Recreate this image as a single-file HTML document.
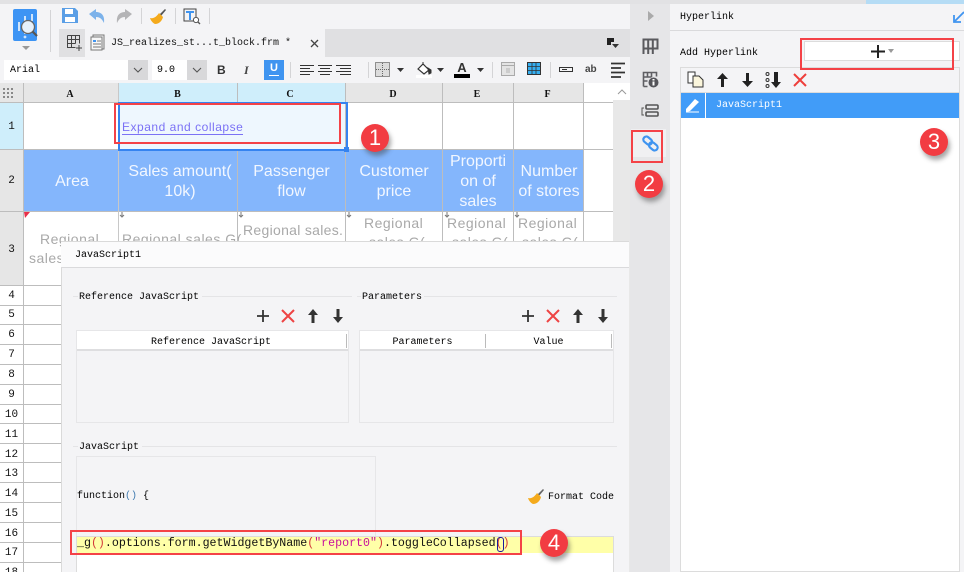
<!DOCTYPE html>
<html><head><meta charset="utf-8">
<style>
html,body{margin:0;padding:0;background:#f4f4f6}
#p{position:relative;width:964px;height:572px;overflow:hidden;background:#f4f4f6;font-family:"Liberation Mono",monospace;font-size:10px;color:#000}
#p div,#p svg{position:absolute}
.hl{height:1px;background:#bdbdbd}
.vl{width:1px;background:#bdbdbd}
.ch{top:83px;height:19px;line-height:23px;text-align:center;font:bold 10px/23px "Liberation Serif",serif;color:#111}
.rn{left:0;width:23px;text-align:center;font:11px/12px "Liberation Mono",monospace;color:#111}
.hd{top:150px;height:61px;padding-top:2px;box-sizing:border-box;background:#84b6fc;color:#f2f7ff;font:16px/20px "Liberation Sans",sans-serif;text-align:center;display:flex;align-items:center;justify-content:center;overflow:hidden}
.g{color:#a9a9a9;font:14px/18px "Liberation Sans",sans-serif;letter-spacing:.5px;white-space:nowrap}
.red{border:2px solid #f44247;box-sizing:border-box}
.b{width:28px;height:28px;border-radius:50%;background:#f23c42;color:#fff;font:22px/28px "Liberation Sans",sans-serif;text-align:center;box-shadow:2px 4px 5px rgba(60,60,60,.45)}
.t{white-space:nowrap;line-height:12px}
.sep{width:1px;background:#d4d4d6}
</style></head><body><div id="p">

<!-- top strip -->
<div style="left:0;top:0;width:964px;height:4px;background:#e2e2e4"></div>
<div style="left:866px;top:0;width:98px;height:4px;background:#b5dcf5"></div>

<!-- tab bar -->
<div style="left:59px;top:29px;width:571px;height:28px;background:#e0e0e2"></div>
<div style="left:85px;top:29px;width:240px;height:28px;background:#f4f4f6"></div>

<!-- left app icon -->
<div style="left:13px;top:9px;width:24px;height:32px;background:#3d94f4;border-radius:2px"></div>
<svg style="left:13px;top:9px" width="26" height="36" viewBox="0 0 26 36"><rect x="5" y="13" width="2" height="9" fill="#cfe4fb"/><rect x="11" y="7" width="2" height="18" fill="#cfe4fb"/><rect x="18" y="5" width="2" height="7" fill="#cfe4fb"/><circle cx="12" cy="28" r="1.400" fill="#cfe4fb"/><circle cx="15" cy="18" r="6.500" fill="#e6f1fc" stroke="#666" stroke-width="1.300"/><path d="M19.500 22.500L24 27" stroke="#555" stroke-width="2.200"/></svg>
<svg style="left:21px;top:45px" width="10" height="6"><path d="M1 1h8L5 5z" fill="#999"/></svg>
<div class="sep" style="left:50px;top:10px;height:42px"></div>

<!-- save/undo/redo/brush/find -->
<svg style="left:61px;top:7px" width="18" height="17"><path d="M1 1h13l3 3v12H1z" fill="#5b9fe6"/><rect x="4" y="2" width="8" height="5" fill="#fff"/><rect x="4" y="10" width="10" height="5" fill="#fff"/></svg>
<svg style="left:88px;top:8px" width="18" height="16"><path d="M1 6L8 1v3c5 0 9 3 8 11-2-4-4-6-8-6v3z" fill="#7cb2ea"/></svg>
<svg style="left:115px;top:8px" width="18" height="16"><path d="M17 6L10 1v3C5 4 1 7 2 15c2-4 4-6 8-6v3z" fill="#b4b4b6"/></svg>
<div class="sep" style="left:141px;top:8px;height:16px"></div>
<svg style="left:149px;top:8px" width="18" height="17"><path d="M11 6l5-5 1 1-5 6z" fill="#555"/><path d="M10 5l4 4c-1 4-4 7-8 7-2-1-4-3-5-6 4 1 7-2 9-5z" fill="#f4aa1c"/></svg>
<div class="sep" style="left:175px;top:8px;height:16px"></div>
<svg style="left:183px;top:8px" width="18" height="17"><rect x="1" y="1" width="12" height="12" fill="none" stroke="#444"/><path d="M3 3h8v2H8v7H6V5H3z" fill="#3f94f0"/><circle cx="13" cy="12" r="2.600" fill="#fff" stroke="#555"/><path d="M15 14l2 2" stroke="#555" stroke-width="1.300"/></svg>
<div class="sep" style="left:209px;top:8px;height:16px"></div>

<!-- tab contents -->
<svg style="left:67px;top:35px" width="16" height="16"><path d="M.5 .5h12v8M.5 .5v12h8M4.500 .5v12M8.500 .5v8M.5 4.500h12M.5 8.500h8" fill="none" stroke="#444"/><path d="M12 10v6M9 13h6" stroke="#444"/></svg>
<svg style="left:90px;top:34px" width="17" height="17"><path d="M3 3V1h11v14h-2" fill="none" stroke="#777"/><rect x="1" y="3" width="11" height="13" fill="#f7f7f7" stroke="#777"/><rect x="3" y="6" width="3" height="2" fill="#3f94f0"/><path d="M7 7h4M3 10h8M3 13h8" stroke="#777"/></svg>
<div class="t" style="left:111px;top:38px;font-size:10px;color:#111">JS_realizes_st...t_block.frm *</div>
<svg style="left:310px;top:39px" width="9" height="9"><path d="M1 1l7 7M8 1L1 8" stroke="#444" stroke-width="1.300"/></svg>
<svg style="left:606px;top:38px" width="14" height="11"><path d="M1 0h7v4H5v3H1z" fill="#222"/><path d="M6 6h7l-3.500 4z" fill="#333"/></svg>

<!-- format row -->
<div style="left:4px;top:60px;width:144px;height:20px;background:#fff"></div>
<div class="t" style="left:10px;top:65px;font-size:10px">Arial</div>
<div style="left:128px;top:60px;width:20px;height:20px;background:#d8d8da"></div>
<svg style="left:133px;top:67px" width="10" height="6"><path d="M1 1l4 4 4-4" fill="none" stroke="#555" stroke-width="1.100"/></svg>
<div style="left:152px;top:60px;width:55px;height:20px;background:#fff"></div>
<div class="t" style="left:157px;top:65px;font-size:10px">9.0</div>
<div style="left:187px;top:60px;width:20px;height:20px;background:#d8d8da"></div>
<svg style="left:192px;top:67px" width="10" height="6"><path d="M1 1l4 4 4-4" fill="none" stroke="#555" stroke-width="1.100"/></svg>
<div style="left:217px;top:64px;font:bold 12px/12px 'Liberation Sans',sans-serif;color:#333">B</div>
<div style="left:244px;top:64px;font:italic bold 12px/12px 'Liberation Serif',serif;color:#444">I</div>
<div style="left:264px;top:60px;width:20px;height:20px;background:#3f94f0"></div>
<div style="left:270px;top:63px;font:bold 11px/11px 'Liberation Sans',sans-serif;color:#fff">U</div>
<div style="left:269px;top:75px;width:10px;height:1px;background:#fff"></div>
<div class="sep" style="left:290px;top:62px;height:16px"></div>
<svg style="left:299px;top:64px" width="60" height="13"><path d="M1 1.500h14M1 4.500h10M1 7.500h14M1 10.500h10M19 1.500h14M21 4.500h10M19 7.500h14M21 10.500h10M37 1.500h15M41 4.500h11M37 7.500h15M41 10.500h11" stroke="#333"/></svg>
<div class="sep" style="left:368px;top:62px;height:16px"></div>
<svg style="left:375px;top:62px" width="16" height="15"><rect x=".5" y=".5" width="14" height="14" fill="#dcdcdc" stroke="#333" stroke-dasharray="1 1"/><path d="M7.500 1v13M1 7.500h13" stroke="#666" stroke-dasharray="1 1"/></svg>
<svg style="left:396px;top:68px" width="9" height="5"><path d="M1 0h7L4.500 4z" fill="#333"/></svg>
<svg style="left:415px;top:61px" width="18" height="17"><rect x="1" y="14" width="16" height="3" fill="#fff"/><path d="M3 8l5-5 6 6-5 4z" fill="#fff" stroke="#333" stroke-width="1.200"/><path d="M8 1v3M13 7l3 2v3l-2 1z" stroke="#333" fill="#333"/></svg>
<svg style="left:436px;top:68px" width="9" height="5"><path d="M1 0h7L4.500 4z" fill="#333"/></svg>
<div style="left:454px;top:61px;width:16px;text-align:center;font:bold 13px/14px 'Liberation Sans',sans-serif;color:#333">A</div>
<div style="left:454px;top:74px;width:16px;height:4px;background:#000"></div>
<svg style="left:476px;top:68px" width="9" height="5"><path d="M1 0h7L4.500 4z" fill="#333"/></svg>
<div class="sep" style="left:492px;top:62px;height:16px"></div>
<svg style="left:501px;top:62px" width="14" height="15"><rect x=".5" y=".5" width="13" height="13" fill="#e4e4e4" stroke="#aaa"/><path d="M1 3.500h12" stroke="#aaa"/><rect x="5" y="6" width="4" height="5" fill="#ccc"/></svg>
<svg style="left:527px;top:62px" width="15" height="14"><rect x=".5" y=".5" width="13" height="12" fill="#35aef0" stroke="#333"/><path d="M1 4.500h12M1 8.500h12M5 1v11M9 1v11" stroke="#333" stroke-width=".8"/></svg>
<div class="sep" style="left:550px;top:62px;height:16px"></div>
<svg style="left:559px;top:66px" width="15" height="8"><rect x=".5" y="1.500" width="13" height="4" fill="none" stroke="#333"/><path d="M3 3.500h5" stroke="#333"/></svg>
<div style="left:585px;top:64px;font:bold 10px/12px 'Liberation Sans',sans-serif;color:#444">ab</div>
<svg style="left:611px;top:62px" width="14" height="16"><path d="M0 1.500h14M0 6h10M0 10.500h14M0 15h10" stroke="#333" stroke-width="1.700"/></svg>

<!-- grid base -->
<div style="left:0;top:83px;width:630px;height:489px;background:#fff"></div>
<div style="left:0;top:83px;width:613px;height:19px;background:#e6e6e6"></div>
<div style="left:118px;top:83px;width:228px;height:19px;background:#cfeefb"></div>
<div style="left:583px;top:83px;width:30px;height:19px;background:#fff"></div>
<div style="left:613px;top:83px;width:17px;height:489px;background:#e8e8e8"></div>
<div style="left:613px;top:83px;width:17px;height:17px;background:#fff"></div>
<svg style="left:617px;top:89px" width="10" height="6"><path d="M1 5l4-4 4 4" fill="none" stroke="#999"/></svg>
<svg style="left:3px;top:88px" width="13" height="10"><g fill="#888"><rect width="2" height="2"/><rect x="4" width="2" height="2"/><rect x="8" width="2" height="2"/><rect y="4" width="2" height="2"/><rect x="4" y="4" width="2" height="2"/><rect x="8" y="4" width="2" height="2"/><rect y="8" width="2" height="2"/><rect x="4" y="8" width="2" height="2"/><rect x="8" y="8" width="2" height="2"/></g></svg>
<div class="ch" style="left:24px;width:92px">A</div>
<div class="ch" style="left:118px;width:119px">B</div>
<div class="ch" style="left:237px;width:106px">C</div>
<div class="ch" style="left:346px;width:94px">D</div>
<div class="ch" style="left:443px;width:68px">E</div>
<div class="ch" style="left:514px;width:67px">F</div>

<div style="left:0;top:102px;width:23px;height:47px;background:#cfeefb"></div>
<div style="left:0;top:150px;width:23px;height:135px;background:#e6e6e6"></div>
<div class="rn" style="top:121px">1</div>
<div class="rn" style="top:175px">2</div>
<div class="rn" style="top:244px">3</div>

<!-- header cells -->
<div class="hd" style="left:24px;width:94px;padding-left:2px">Area</div>
<div class="hd" style="left:119px;width:118px;padding-left:4px">Sales amount(<br>10k)</div>
<div class="hd" style="left:238px;width:107px">Passenger<br>flow</div>
<div class="hd" style="left:346px;width:96px">Customer<br>price</div>
<div class="hd" style="left:443px;width:70px">Proporti<br>on of<br>sales</div>
<div class="hd" style="left:514px;width:70px">Number<br>of stores</div>

<!-- row 1 selected cell -->
<div style="left:118px;top:102px;width:228px;height:47px;background:#eef7fe"></div>
<div style="left:122px;top:120px;font:12px/14px 'Liberation Sans',sans-serif;letter-spacing:.52px;color:#7b72f5;white-space:nowrap;border-bottom:1px solid #7b72f5">Expand and collapse</div>

<!-- row 3 text -->
<div class="g" style="left:40px;top:230px">Regional</div>
<div class="g" style="left:29px;top:249px">sales</div>
<div class="g" style="left:122px;top:230px">Regional sales G(</div>
<div class="g" style="left:243px;top:221px;letter-spacing:.3px">Regional sales.</div>
<div class="g" style="left:364px;top:214px">Regional</div>
<div class="g" style="left:369px;top:233px">sales G(</div>
<div class="g" style="left:447px;top:214px">Regional</div>
<div class="g" style="left:452px;top:233px">sales G(</div>
<div class="g" style="left:518px;top:214px">Regional</div>
<div class="g" style="left:522px;top:233px">sales G(</div>

<!-- grid lines -->
<div class="hl" style="left:0;top:102px;width:613px"></div>
<div class="hl" style="left:0;top:149px;width:613px"></div>
<div class="hl" style="left:0;top:211px;width:613px"></div>
<div class="hl" style="left:0;top:285px;width:61px"></div>
<div class="hl" style="left:0;top:305px;width:61px"></div>
<div class="hl" style="left:0;top:324px;width:61px"></div>
<div class="hl" style="left:0;top:344px;width:61px"></div>
<div class="hl" style="left:0;top:364px;width:61px"></div>
<div class="hl" style="left:0;top:384px;width:61px"></div>
<div class="hl" style="left:0;top:404px;width:61px"></div>
<div class="hl" style="left:0;top:423px;width:61px"></div>
<div class="hl" style="left:0;top:443px;width:61px"></div>
<div class="hl" style="left:0;top:462px;width:61px"></div>
<div class="hl" style="left:0;top:482px;width:61px"></div>
<div class="hl" style="left:0;top:502px;width:61px"></div>
<div class="hl" style="left:0;top:522px;width:61px"></div>
<div class="hl" style="left:0;top:542px;width:61px"></div>
<div class="hl" style="left:0;top:562px;width:61px"></div>
<div class="vl" style="left:23px;top:83px;height:489px"></div>
<div class="vl" style="left:118px;top:83px;height:158px;background:#c8c8c8"></div>
<div class="vl" style="left:237px;top:83px;height:19px"></div>
<div class="vl" style="left:237px;top:150px;height:91px"></div>
<div class="vl" style="left:345px;top:83px;height:158px"></div>
<div class="vl" style="left:442px;top:83px;height:158px"></div>
<div class="vl" style="left:513px;top:83px;height:158px"></div>
<div class="vl" style="left:583px;top:83px;height:158px"></div>

<!-- small row 3 markers -->
<svg style="left:24px;top:212px" width="6" height="6"><path d="M0 0h6L1 6z" fill="#e8304a"/></svg>
<svg style="left:119px;top:212px" width="6" height="6"><path d="M3 0v4M1 3l2 2 2-2" fill="none" stroke="#777"/></svg>
<svg style="left:238px;top:212px" width="6" height="6"><path d="M3 0v4M1 3l2 2 2-2" fill="none" stroke="#777"/></svg>
<svg style="left:346px;top:212px" width="6" height="6"><path d="M3 0v4M1 3l2 2 2-2" fill="none" stroke="#777"/></svg>
<svg style="left:444px;top:212px" width="6" height="6"><path d="M3 0v4M1 3l2 2 2-2" fill="none" stroke="#777"/></svg>
<svg style="left:514px;top:212px" width="6" height="6"><path d="M3 0v4M1 3l2 2 2-2" fill="none" stroke="#777"/></svg>

<!-- row numbers -->
<div class="rn" style="top:290px">4</div>
<div class="rn" style="top:309px">5</div>
<div class="rn" style="top:329px">6</div>
<div class="rn" style="top:349px">7</div>
<div class="rn" style="top:369px">8</div>
<div class="rn" style="top:389px">9</div>
<div class="rn" style="top:409px">10</div>
<div class="rn" style="top:429px">11</div>
<div class="rn" style="top:449px">12</div>
<div class="rn" style="top:468px">13</div>
<div class="rn" style="top:488px">14</div>
<div class="rn" style="top:508px">15</div>
<div class="rn" style="top:528px">16</div>
<div class="rn" style="top:547px">17</div>
<div class="rn" style="top:567px">18</div>

<!-- selection -->
<div style="left:118px;top:102px;width:230px;height:49px;border:2px solid #3583f0;box-sizing:border-box"></div>
<div style="left:344px;top:147px;width:5px;height:5px;background:#3583f0"></div>
<div class="red" style="left:114px;top:103px;width:227px;height:41px"></div>

<!-- sidebar -->
<div style="left:630px;top:4px;width:40px;height:568px;background:#e6e6e8"></div>
<div style="left:631px;top:129px;width:35px;height:28px;background:#f0f0f2"></div>
<svg style="left:648px;top:11px" width="6" height="10"><path d="M0 0l6 5-6 5z" fill="#aaa"/></svg>
<svg style="left:642px;top:38px" width="17" height="17"><path d="M1.500 16V1.500h14v9h-14M6.200 1.500v14.500M10.800 1.500v14.500" fill="none" stroke="#5a5a5e" stroke-width="2"/></svg>
<svg style="left:642px;top:71px" width="17" height="17"><path d="M1.500 15.500V1.500h13v4M1.500 6h8M1.500 10h4M5.500 1.500v4.500M9.500 1.500v4.500M1.500 15.500h4" fill="none" stroke="#5f5f63" stroke-width="1.600"/><circle cx="11.500" cy="11.500" r="5" fill="#55555a"/><rect x="10.500" y="10.500" width="2" height="4" fill="#fff"/><rect x="10.500" y="8" width="2" height="1.500" fill="#fff"/></svg>
<svg style="left:641px;top:104px" width="18" height="14"><rect x="5" y="1" width="12" height="4" rx="1" fill="none" stroke="#555" stroke-width="1.600"/><rect x="5" y="8" width="12" height="4" rx="1" fill="none" stroke="#555" stroke-width="1.600"/><path d="M3 4H1v7h2" fill="none" stroke="#555"/></svg>
<svg style="left:642px;top:135px" width="17" height="17" viewBox="0 0 17 17"><g fill="none" stroke="#3f94f0" stroke-width="2.200"><rect x="1" y="2.500" width="9.500" height="6" rx="3" transform="rotate(40 5.500 5.500)"/><rect x="6.500" y="8.500" width="9.500" height="6" rx="3" transform="rotate(40 11.500 11.500)"/></g></svg>

<!-- right panel -->
<div style="left:670px;top:4px;width:294px;height:568px;background:#f4f4f6"></div>
<div style="left:670px;top:30px;width:294px;height:1px;background:#dadadc"></div>
<div class="t" style="left:680px;top:12px;font-size:10px">Hyperlink</div>
<svg style="left:953px;top:11px" width="11" height="12"><path d="M11 1L2 10" stroke="#3f94f0" stroke-width="1.800"/><path d="M1 4v7h7" fill="none" stroke="#3f94f0" stroke-width="1.800"/></svg>
<div class="t" style="left:680px;top:48px;font-size:10px">Add Hyperlink</div>
<div style="left:804px;top:41px;width:156px;height:20px;background:#fff;box-sizing:border-box;border:1px solid #dcdcdc"></div>
<svg style="left:870px;top:44px" width="26" height="15"><path d="M8 1v13M1 7.500h14" stroke="#222" stroke-width="2"/><path d="M18 5h6l-3 4z" fill="#999"/></svg>
<div style="left:680px;top:67px;width:280px;height:505px;background:#fff;border:1px solid #dcdcdc;box-sizing:border-box"></div>
<div style="left:681px;top:68px;width:278px;height:24px;background:#f4f4f6;border-bottom:1px solid #dcdcdc"></div>
<svg style="left:687px;top:71px" width="18" height="18"><path d="M1 1h7v11H1z" fill="#fff" stroke="#333"/><path d="M6 5h6l4 4v7H6z" fill="#fbf6dc" stroke="#333"/></svg>
<svg style="left:716px;top:73px" width="13" height="14"><path d="M6.500 0L12 6H8v8H5V6H1z" fill="#222"/></svg>
<svg style="left:741px;top:73px" width="13" height="14"><path d="M6.500 14L1 8h4V0h3v8h4z" fill="#222"/></svg>
<svg style="left:765px;top:72px" width="18" height="16"><circle cx="2.500" cy="2" r="1.500" fill="none" stroke="#333"/><circle cx="2.500" cy="8" r="1.500" fill="none" stroke="#333"/><circle cx="2.500" cy="14" r="1.500" fill="none" stroke="#333"/><path d="M11 16L6 10h3V0h4v10h3z" fill="#222"/></svg>
<svg style="left:793px;top:73px" width="14" height="14"><path d="M1 1l12 12M13 1L1 13" stroke="#ee3f3c" stroke-width="2"/></svg>
<div style="left:681px;top:93px;width:278px;height:25px;background:#419cf8"></div>
<div style="left:705px;top:93px;width:1px;height:25px;background:#fff"></div>
<svg style="left:685px;top:97px" width="17" height="16"><path d="M1 12L10 2l4 3-9 9-4 1z" fill="#fff"/><path d="M1 15h13" stroke="#fff"/></svg>
<div class="t" style="left:716px;top:100px;font-size:10px;color:#fff">JavaScript1</div>

<!-- dialog -->
<div style="left:61px;top:241px;width:568px;height:331px;background:#f4f4f6;border-left:1px solid #dadada;box-sizing:border-box"></div>
<div style="left:61px;top:241px;width:568px;height:27px;background:#fbfbfc;border-top:1px solid #dadada;border-bottom:1px solid #dadadc;box-sizing:border-box"></div>
<div class="t" style="left:75px;top:250px;font-size:10px">JavaScript1</div>

<div style="left:73px;top:296px;width:5px;height:1px;background:#e4e4e6"></div>
<div style="left:202px;top:296px;width:150px;height:1px;background:#e4e4e6"></div>
<div class="t" style="left:79px;top:292px;font-size:10px">Reference JavaScript</div>
<div style="left:357px;top:296px;width:4px;height:1px;background:#e4e4e6"></div>
<div style="left:424px;top:296px;width:193px;height:1px;background:#e4e4e6"></div>
<div class="t" style="left:362px;top:292px;font-size:10px">Parameters</div>

<svg style="left:256px;top:309px" width="92" height="14"><path d="M7 1v12M1 7h12" stroke="#333" stroke-width="1.800"/><path d="M26 1l12 12M38 1L26 13" stroke="#ee4444" stroke-width="2"/><path d="M57 0l5 6h-3.500v8h-3V6H52z" fill="#333"/><path d="M82 14l-5-6h3.500V0h3v8H87z" fill="#333"/></svg>
<svg style="left:521px;top:309px" width="92" height="14"><path d="M7 1v12M1 7h12" stroke="#333" stroke-width="1.800"/><path d="M26 1l12 12M38 1L26 13" stroke="#ee4444" stroke-width="2"/><path d="M57 0l5 6h-3.500v8h-3V6H52z" fill="#333"/><path d="M82 14l-5-6h3.500V0h3v8H87z" fill="#333"/></svg>

<div style="left:76px;top:330px;width:273px;height:93px;border:1px solid #e6e6e8;box-sizing:border-box"></div>
<div style="left:77px;top:331px;width:271px;height:18px;background:#fff;border-bottom:2px solid #dedee0"></div>
<div class="t" style="left:77px;top:337px;width:268px;text-align:center;font-size:10px">Reference JavaScript</div>
<div style="left:346px;top:334px;width:1px;height:14px;background:#bbb"></div>
<div style="left:359px;top:330px;width:255px;height:93px;border:1px solid #e6e6e8;box-sizing:border-box"></div>
<div style="left:360px;top:331px;width:253px;height:18px;background:#fff;border-bottom:2px solid #dedee0"></div>
<div class="t" style="left:360px;top:337px;width:125px;text-align:center;font-size:10px">Parameters</div>
<div class="t" style="left:486px;top:337px;width:125px;text-align:center;font-size:10px">Value</div>
<div style="left:485px;top:334px;width:1px;height:14px;background:#bbb"></div>
<div style="left:611px;top:334px;width:1px;height:14px;background:#bbb"></div>

<div style="left:73px;top:446px;width:5px;height:1px;background:#e4e4e6"></div>
<div style="left:142px;top:446px;width:475px;height:1px;background:#e4e4e6"></div>
<div class="t" style="left:79px;top:442px;font-size:10px">JavaScript</div>
<div style="left:76px;top:456px;width:300px;height:80px;border:1px solid #e6e6e8;border-bottom:0;box-sizing:border-box"></div>
<div class="t" style="left:77px;top:491px;font-size:10px">function<span style="color:#3f7ab0">()</span> {</div>
<svg style="left:527px;top:488px" width="17" height="17"><path d="M11 6l5-5 1 1-5 6z" fill="#666"/><path d="M10 5l4 4c-1 4-4 7-8 7-2-1-4-3-5-6 4 1 7-2 9-5z" fill="#f4aa1c"/></svg>
<div class="t" style="left:548px;top:492px;font-size:10px">Format Code</div>

<div style="left:76px;top:536px;width:538px;height:36px;background:#fff;border:1px solid #dcdcdc;border-bottom:0;box-sizing:border-box"></div>
<div style="left:77px;top:537px;width:536px;height:16px;background:#ffffa8"></div>
<div class="t" style="left:77px;top:537px;font-size:11.64px;line-height:14px;color:#111">_g<span style="color:#d23a3a">()</span>.options.form.getWidgetByName<span style="color:#d23a3a">(</span><span style="color:#c8129c">"report0"</span><span style="color:#d23a3a">)</span>.toggleCollapsed<span style="color:#d23a3a">()</span></div>
<div style="left:497px;top:537px;width:7px;height:15px;border:1px solid #1a1a9c;border-radius:3px;box-sizing:border-box"></div>

<!-- annotation rects -->
<div class="red" style="left:631px;top:130px;width:32px;height:33px"></div>
<div class="red" style="left:800px;top:38px;width:154px;height:32px"></div>
<div class="red" style="left:70px;top:530px;width:452px;height:25px"></div>

<!-- badges -->
<div class="b" style="left:361px;top:124px">1</div>
<div class="b" style="left:635px;top:170px">2</div>
<div class="b" style="left:920px;top:128px">3</div>
<div class="b" style="left:540px;top:529px">4</div>

</div></body></html>
